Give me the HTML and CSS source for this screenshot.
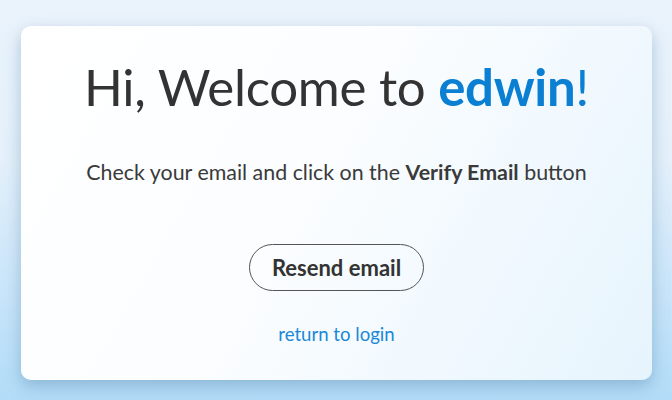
FILE: index.html
```html
<!DOCTYPE html>
<html lang="en">
  <head>
    <meta charset="UTF-8" />
    <meta name="viewport" content="width=device-width, initial-scale=1.0" />
    <title>Verify email</title>
    <link rel="stylesheet" href="styles.css">
  </head>
  <body>
    <div class="page">
      <div class="card">
        <h1 class="title">Hi, Welcome to <span class="brand"><strong>edwin</strong>!</span></h1>
        <p class="message">Check your email and click on the <b>Verify Email</b> button</p>
        <button class="resend">Resend email</button>
        <a class="back" href="#">return to login</a>
      </div>
    </div>
  </body>
</html>
```

FILE: styles.css
```css
html,
body {
  margin: 0;
  height: 100%;
}
body {
  font-family: Lato, "Open Sans", sans-serif;
  color: #333;
  background: linear-gradient(to bottom, #eaf3fc 0%, #e4f0fb 40%, #b2dcf8 100%);
}
.page {
  height: 100%;
  padding: 26px 20px 20px 21px;
  box-sizing: border-box;
}
.card {
  width: 631px;
  height: 354px;
  box-sizing: border-box;
  border-radius: 10px;
  background: linear-gradient(120deg, #ffffff 0%, #fbfdff 45%, #e6f4fd 100%);
  box-shadow: 0 6px 16px rgba(60, 110, 150, 0.35);
  display: flex;
  flex-direction: column;
  align-items: center;
  padding-top: 30px;
}
.title {
  margin: 0;
  font-size: 51px;
  font-weight: 400;
  letter-spacing: -0.3px;
  color: #333;
}
.brand {
  color: #0b7fd1;
}
.brand strong {
  font-weight: 700;
}
.message {
  margin: 42px 0 0;
  font-size: 21.4px;
  color: #3a3a3a;
}
.resend {
  margin-top: 59px;
  width: 175px;
  height: 47px;
  border: 1px solid #555;
  border-radius: 24px;
  background: transparent;
  font-family: inherit;
  font-size: 22px;
  font-weight: 700;
  color: #333;
  cursor: pointer;
}
.back {
  margin-top: 32px;
  font-size: 18.6px;
  color: #1a88d6;
  text-decoration: none;
}
```
